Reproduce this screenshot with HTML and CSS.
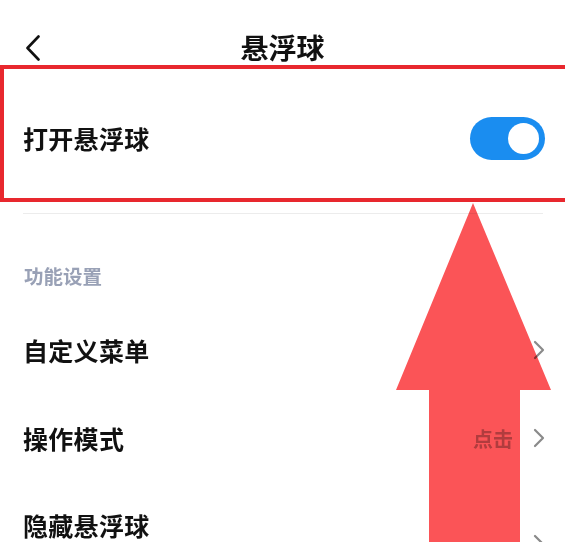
FILE: index.html
```html
<!DOCTYPE html>
<html lang="zh-CN">
<head>
<meta charset="utf-8">
<title>悬浮球</title>
<link rel="stylesheet" href="styles.css">
</head>
<body>
<div class="page">
  <header class="header">
    <svg class="back" width="16" height="26" viewBox="0 0 16 26" aria-hidden="true">
      <path d="M13.5 1.5 L2.5 13 L13.5 24.5" fill="none" stroke="#111" stroke-width="2.6" stroke-linecap="round" stroke-linejoin="round"/>
    </svg>
    <h1 class="title">悬浮球</h1>
  </header>

  <div class="row row-main">
    <span class="row-text">打开悬浮球</span>
    <span class="toggle"><span class="knob"></span></span>
  </div>
  <div class="divider"></div>

  <div class="section-label">功能设置</div>

  <div class="row">
    <span class="row-text">自定义菜单</span>
    <span class="row-right">
      <svg class="chev" width="12" height="20" viewBox="0 0 12 20" aria-hidden="true"><path d="M2 2 L10 10 L2 18" fill="none" stroke="#8a8a8a" stroke-width="2.2" stroke-linecap="round" stroke-linejoin="round"/></svg>
    </span>
  </div>
  <div class="row">
    <span class="row-text">操作模式</span>
    <span class="row-right">
      <span class="value">点击</span>
      <svg class="chev" width="12" height="20" viewBox="0 0 12 20" aria-hidden="true"><path d="M2 2 L10 10 L2 18" fill="none" stroke="#8a8a8a" stroke-width="2.2" stroke-linecap="round" stroke-linejoin="round"/></svg>
    </span>
  </div>
  <div class="row row-tall">
    <span class="row-text">隐藏悬浮球</span>
    <span class="row-right">
      <svg class="chev" width="12" height="20" viewBox="0 0 12 20" aria-hidden="true"><path d="M2 2 L10 10 L2 18" fill="none" stroke="#8a8a8a" stroke-width="2.2" stroke-linecap="round" stroke-linejoin="round"/></svg>
    </span>
  </div>

  <div class="highlight-box"></div>
  <svg class="arrow" width="565" height="542" viewBox="0 0 565 542" aria-hidden="true">
    <polygon points="473,203 551,390 520,390 520,545 429,545 429,390 396,390" fill="#fb5457"/>
  </svg>
</div>
</body>
</html>
```

FILE: styles.css
```css
* { box-sizing: border-box; }

html, body {
  margin: 0;
  padding: 0;
  background: #ffffff;
}

body {
  font-family: "Noto Sans CJK SC", "Noto Sans", sans-serif;
  color: #111111;
}

.page {
  position: relative;
  width: 565px;
  height: 542px;
  overflow: hidden;
}

.header {
  position: relative;
  height: 65px;
  padding-top: 29px;
  display: flex;
  justify-content: center;
}

.back {
  position: absolute;
  left: 25px;
  top: 35px;
}

.title {
  margin: 0;
  height: 36px;
  line-height: 36px;
  font-size: 28px;
  font-weight: 700;
  color: #111;
}

.row {
  display: flex;
  align-items: center;
  justify-content: space-between;
  height: 88px;
  padding: 0 20px 0 23px;
}

.row-main {
  height: 148px;
  padding-bottom: 2px;
}

.row-tall {
  height: 124px;
}

.row-tall .row-text {
  padding-bottom: 38px;
}

.row-text {
  font-size: 25px;
  font-weight: 700;
  letter-spacing: 0.3px;
  color: #111;
}

.row-right {
  display: flex;
  align-items: center;
}

.value {
  font-size: 20px;
  font-weight: 700;
  color: #b4b4b4;
  margin-right: 20px;
}

.chev {
  display: block;
}

.toggle {
  position: relative;
  width: 75px;
  height: 43px;
  border-radius: 22px;
  background: #1a8df0;
  display: block;
}

.knob {
  position: absolute;
  right: 6px;
  top: 6px;
  width: 31px;
  height: 31px;
  border-radius: 50%;
  background: #ffffff;
}

.divider {
  height: 1px;
  margin: 0 22px 0 23px;
  background: #ececec;
}

.section-label {
  padding: 48px 0 0 24px;
  height: 92px;
  line-height: 28px;
  font-size: 19.5px;
  font-weight: 700;
  color: #99a1b6;
}

.highlight-box {
  position: absolute;
  left: 0;
  top: 65px;
  width: 600px;
  height: 137px;
  border: 4px solid #e8282e;
  border-right: none;
}

.arrow {
  position: absolute;
  left: 0;
  top: 0;
  mix-blend-mode: multiply;
}
```
